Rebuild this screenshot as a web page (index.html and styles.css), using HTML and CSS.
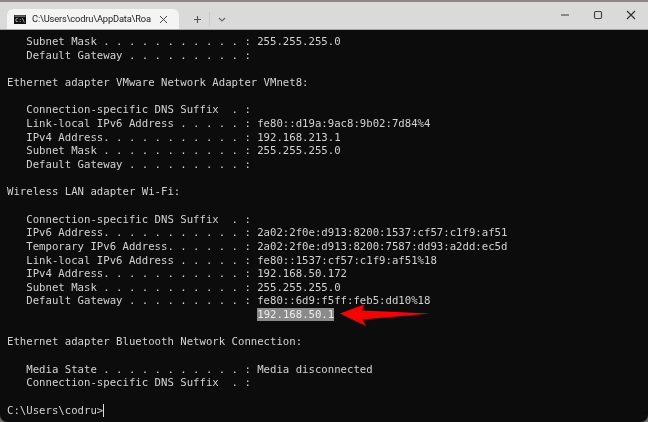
FILE: index.html
```html
<!DOCTYPE html>
<html lang="en">
<head>
<meta charset="utf-8">
<title>Terminal</title>
<link rel="stylesheet" href="styles.css">
</head>
<body>
<div class="window">
  <header class="titlebar">
    <div class="tab">
      <svg class="tab-icon" width="12" height="9" viewBox="0 0 12 9"><rect width="12" height="9" fill="#111"/><rect x="0.5" y="0.5" width="11" height="1.2" fill="#888"/><text x="1.2" y="7" class="tab-icon-text">C:\</text></svg>
      <span class="tab-title">C:\Users\codru\AppData\Roa</span>
      <svg class="tab-close" width="9" height="9" viewBox="0 0 9 9"><path d="M1 1l7 7M8 1l-7 7" stroke="#444" stroke-width="1" fill="none"/></svg>
    </div>
    <button class="new-tab"><svg width="9" height="9" viewBox="0 0 9 9"><path d="M4.500 1v7M1 4.500h7" stroke="#555" stroke-width="1.100" fill="none"/></svg></button>
    <span class="divider"></span>
    <button class="drop"><svg width="8" height="5" viewBox="0 0 8 5"><path d="M1 1l3 3 3-3" stroke="#666" stroke-width="1.100" fill="none"/></svg></button>
    <div class="controls">
      <svg width="10" height="10" viewBox="0 0 10 10"><path d="M1 5h8" stroke="#555" stroke-width="1.200" fill="none"/></svg>
      <svg width="10" height="10" viewBox="0 0 10 10"><rect x="1.500" y="1.500" width="7" height="7" rx="1.200" stroke="#444" stroke-width="1.200" fill="none"/></svg>
      <svg width="10" height="10" viewBox="0 0 10 10"><path d="M1 1l8 8M9 1l-8 8" stroke="#333" stroke-width="1.200" fill="none"/></svg>
    </div>
  </header>
  <main class="term">
<pre class="output">   Subnet Mask . . . . . . . . . . . : 255.255.255.0
   Default Gateway . . . . . . . . . :

Ethernet adapter VMware Network Adapter VMnet8:

   Connection-specific DNS Suffix  . :
   Link-local IPv6 Address . . . . . : fe80::d19a:9ac8:9b02:7d84%4
   IPv4 Address. . . . . . . . . . . : 192.168.213.1
   Subnet Mask . . . . . . . . . . . : 255.255.255.0
   Default Gateway . . . . . . . . . :

Wireless LAN adapter Wi-Fi:

   Connection-specific DNS Suffix  . :
   IPv6 Address. . . . . . . . . . . : 2a02:2f0e:d913:8200:1537:cf57:c1f9:af51
   Temporary IPv6 Address. . . . . . : 2a02:2f0e:d913:8200:7587:dd93:a2dd:ec5d
   Link-local IPv6 Address . . . . . : fe80::1537:cf57:c1f9:af51%18
   IPv4 Address. . . . . . . . . . . : 192.168.50.172
   Subnet Mask . . . . . . . . . . . : 255.255.255.0
   Default Gateway . . . . . . . . . : fe80::6d9:f5ff:feb5:dd10%18
                                       <span class="sel">192.168.50.1</span>

Ethernet adapter Bluetooth Network Connection:

   Media State . . . . . . . . . . . : Media disconnected
   Connection-specific DNS Suffix  . :

C:\Users\codru&gt;<span class="cursor"></span></pre>
    <svg class="arrow" width="92" height="24" viewBox="0 0 92 24"><path d="M0 11.500L24 2.500L22 8.500L90 11.500L22 17.500L26 24Z" fill="#fa0000"/></svg>
  </main>
</div>
</body>
</html>
```
FILE: styles.css
```css
html, body {
  margin: 0;
  padding: 0;
  width: 648px;
  height: 422px;
  overflow: hidden;
  background: #6f6c6c;
}
.window {
  width: 648px;
  height: 422px;
  display: flex;
  flex-direction: column;
  border-top: 2px solid #8f8885;
  box-sizing: border-box;
  overflow: hidden;
  filter: blur(0.3px);
}
.titlebar {
  height: 28px;
  flex: none;
  background: #dadada;
  display: flex;
  align-items: flex-end;
  border-bottom: 1px solid #a8a8a8;
  box-sizing: border-box;
  padding-left: 7px;
}
.tab {
  width: 172px;
  height: 20px;
  background: #f4f4f4;
  border-radius: 6px 6px 0 0;
  display: flex;
  align-items: center;
  box-sizing: border-box;
  padding-left: 7px;
}
.tab-icon { flex: none; }
.tab-icon-text {
  font: 5.500px "DejaVu Sans Mono", monospace;
  fill: #eee;
}
.tab-title {
  font: 9.300px/1.3 Roboto, "Noto Sans", sans-serif;
  letter-spacing: -0.15px;
  color: #222;
  flex: none;
  width: 118px;
  margin-left: 6px;
  white-space: nowrap;
}
.tab-close { margin-left: 9px; flex: none; }
.new-tab, .drop {
  border: 0;
  background: none;
  padding: 0;
  display: flex;
  align-items: center;
  justify-content: center;
  height: 20px;
}
.new-tab { width: 9px; margin-left: 14px; }
.divider {
  width: 1px;
  height: 14px;
  margin: 0 0 3px 7px;
  background: #cbcbcb;
}
.drop { width: 8px; margin-left: 8px; }
.controls {
  margin-left: auto;
  align-self: flex-start;
  display: flex;
  gap: 23px;
  height: 26px;
  align-items: center;
  padding-right: 12px;
}
.term {
  position: relative;
  flex: 1;
  background: #0c0c0c;
  border-radius: 0 0 7px 7px;
  padding: 5px 0 0 7px;
}
.output {
  margin: 0;
  font: 10.670px/13.650px "DejaVu Sans Mono", monospace;
  color: #d2d2d2;
}
.sel {
  background: #8a8a8a;
  color: #ececec;
}
.cursor {
  display: inline-block;
  width: 1px;
  height: 13px;
  background: #ddd;
  vertical-align: -3px;
}
.arrow {
  position: absolute;
  left: 340px;
  top: 272px;
}
```
